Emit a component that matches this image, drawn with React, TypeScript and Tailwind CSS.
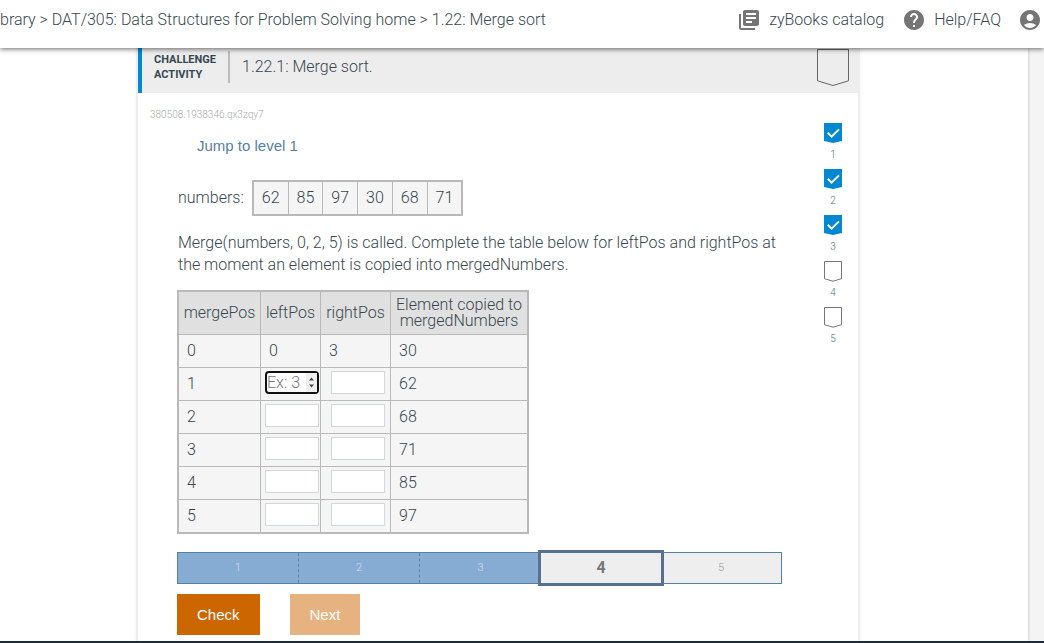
import { MdAccountCircle, MdHelp, MdLibraryBooks } from 'react-icons/md';
import clsx from 'clsx';

const NUMBERS = [62, 85, 97, 30, 68, 71];
const MERGED = [30, 62, 68, 71, 85, 97];
const LEVELS = [1, 2, 3, 4, 5];
const CURRENT_LEVEL = 4;

function LevelFlag({ done }: { done: boolean }) {
    return (
        <svg width="18" height="21" viewBox="0 0 18 21" className="block">
            {done ? (
                <>
                    <path d="M0 0h18v18l-9 2-9-2z" fill="#0288d1" />
                    <path d="M3.8 9.8 7.6 13.6 15 6.4" fill="none" stroke="#fff" strokeWidth="2" />
                </>
            ) : (
                <path d="M.5.5h17v17.2L9 20.2.5 17.7z" fill="#fff" stroke="#777" />
            )}
        </svg>
    );
}

function TopBar() {
    return (
        <header className="relative z-10 flex h-12 shrink-0 items-center justify-between bg-white pb-2 pr-0.5 text-[#37474f] shadow-[0_1px_5px_rgba(0,0,0,0.6)]">
            <nav className="overflow-hidden whitespace-nowrap">
                brary &gt; DAT/305: Data Structures for Problem Solving home &gt; 1.22: Merge sort
            </nav>
            <div className="flex shrink-0 items-center">
                <a href="#catalog" className="mr-[18px] flex items-center gap-2">
                    <MdLibraryBooks size={24} className="text-[#757575]" />
                    zyBooks catalog
                </a>
                <a href="#help" className="mr-[17px] flex items-center gap-2">
                    <MdHelp size={24} className="text-[#757575]" />
                    Help/FAQ
                </a>
                <button aria-label="Account">
                    <MdAccountCircle size={24} className="text-[#757575]" />
                </button>
            </div>
        </header>
    );
}

function PositionInput({ label, active }: { label: string; active?: boolean }) {
    return (
        <div className="relative w-[54px]">
            <input
                type="number"
                aria-label={label}
                placeholder={active ? 'Ex: 3' : undefined}
                className={clsx(
                    'block h-[23px] w-full bg-white outline-none placeholder:text-[#757575] [&::-webkit-inner-spin-button]:appearance-none',
                    active ? 'rounded border-2 border-[#101010]' : 'border border-[#cfd8dc]'
                )}
            />
            {active && (
                <svg
                    width="11"
                    height="19"
                    viewBox="0 0 11 19"
                    className="pointer-events-none absolute right-0.5 top-0.5"
                >
                    <path d="M0 0h11v19H0z" fill="#efefef" />
                    <path d="M3 7.5 5.5 4.5 8 7.5zM3 11.5 5.5 14.5 8 11.5z" fill="#444" />
                </svg>
            )}
        </div>
    );
}

function MergeTable() {
    const head = 'border-b border-[#b9b9b9] bg-[#e0e0e0] p-0 text-center font-light leading-4';
    const cell = 'border-b border-[#b9b9b9] px-2 py-0 group-last:border-b-0';
    const inputCell = 'border-b border-r border-[#b9b9b9] pt-[3px] align-top group-last:border-b-0';

    return (
        <table className="mt-3.5 table-fixed border-separate border-spacing-0 border-2 border-[#b9b9b9] bg-[#f5f5f5] text-[#37474f]">
            <thead>
                <tr className="h-[43px]">
                    <th className={clsx(head, 'w-[82px] border-r')}>mergePos</th>
                    <th className={clsx(head, 'w-[60px] border-r')}>leftPos</th>
                    <th className={clsx(head, 'w-[70px] border-r')}>rightPos</th>
                    <th className={clsx(head, 'w-[136px]')}>
                        Element copied to
                        <br />
                        mergedNumbers
                    </th>
                </tr>
            </thead>
            <tbody>
                {MERGED.map((value, pos) => (
                    <tr key={pos} className="group h-[33px] last:h-8">
                        <td className={clsx(cell, 'border-r')}>{pos}</td>
                        {pos === 0 ? (
                            <>
                                <td className={clsx(cell, 'border-r')}>0</td>
                                <td className={clsx(cell, 'border-r')}>3</td>
                            </>
                        ) : (
                            <>
                                <td className={clsx(inputCell, 'pl-1')}>
                                    <PositionInput label={`leftPos ${pos}`} active={pos === 1} />
                                </td>
                                <td className={clsx(inputCell, 'pl-2.5')}>
                                    <PositionInput label={`rightPos ${pos}`} />
                                </td>
                            </>
                        )}
                        <td className={cell}>{value}</td>
                    </tr>
                ))}
            </tbody>
        </table>
    );
}

function ProgressBar() {
    return (
        <ol className="mt-[18px] flex h-8 border border-[#5780a6] bg-[#eee] text-[11px]">
            {LEVELS.map((level) => (
                <li
                    key={level}
                    className={clsx(
                        'flex items-center justify-center',
                        level < CURRENT_LEVEL && 'w-[121px] shrink-0 bg-[#87acd3] text-[#d5dde6]',
                        level < CURRENT_LEVEL - 1 && 'border-r border-dashed border-[#5780a6]',
                        level === CURRENT_LEVEL &&
                            'relative flex-1 text-base font-bold text-[#777] outline-3 outline-[#566f93]',
                        level > CURRENT_LEVEL && 'flex-1 text-[#999]'
                    )}
                >
                    {level}
                </li>
            ))}
        </ol>
    );
}

export default function App() {
    return (
        <div className="flex h-screen flex-col overflow-hidden border-b-2 border-[#1f2940] bg-[#f4f4f4] font-['Roboto',sans-serif] text-base font-light">
            <TopBar />
            <main className="mr-4 flex min-h-0 flex-1 justify-center bg-white pr-8 shadow-[0_0_3px_rgba(0,0,0,0.25)]">
                <section className="w-[720px] bg-white shadow-[0_0_0_2px_#eee,0_0_6px_rgba(0,0,0,0.1)]">
                    <div className="flex h-[45px] items-center border-l-4 border-[#0288d1] bg-[#ededed] pb-2 pl-3 pr-[9px]">
                        <div className="w-[74px] text-[11px] font-bold uppercase leading-[15px] text-[#37474f]">
                            Challenge activity
                        </div>
                        <div className="h-8 w-0.5 bg-[#bbb]" />
                        <h1 className="ml-3 flex-1 text-[#37474f]">1.22.1: Merge sort.</h1>
                        <svg width="32" height="37" viewBox="0 0 32 37" className="block overflow-visible">
                            <path d="M.5 1.5h31v31.3L16 37.5.5 32.8z" fill="none" stroke="#666" />
                        </svg>
                    </div>

                    <div className="flex">
                        <div className="flex-1 pl-3 pt-3.5">
                            <div className="text-[10px] leading-4 text-[#aaa]">380508.1938346.qx3zqy7</div>
                            <div className="ml-[27px] mr-[26px]">
                                <a
                                    href="#level-1"
                                    className="ml-5 mt-3.5 block font-['Liberation_Sans',sans-serif] text-[15px] font-normal leading-[18px] text-[#5780a6]"
                                >
                                    Jump to level 1
                                </a>

                                <div className="mt-[25px] flex items-center gap-2 pl-px text-[#37474f]">
                                    <span>numbers:</span>
                                    <div className="flex border-2 border-[#b9b9b9] bg-[#f5f5f5]">
                                        {NUMBERS.map((n) => (
                                            <div
                                                key={n}
                                                className="flex h-8 items-center justify-center border-r border-[#b9b9b9] px-2 last:border-r-0"
                                            >
                                                {n}
                                            </div>
                                        ))}
                                    </div>
                                </div>

                                <p className="mt-4 pl-px leading-[22px] text-[#37474f]">
                                    Merge(numbers, 0, 2, 5) is called. Complete the table below for leftPos and rightPos at
                                    the moment an element is copied into mergedNumbers.
                                </p>

                                <MergeTable />
                                <ProgressBar />

                                <div className="mt-2.5 flex gap-[30px] font-['Liberation_Sans',sans-serif] text-[15px] font-normal leading-[17px] text-white">
                                    <button className="bg-[#cc6600] px-5 py-3">Check</button>
                                    <button disabled className="bg-[#e6b280] px-5 py-3">
                                        Next
                                    </button>
                                </div>
                            </div>
                        </div>

                        <ol className="flex w-[50px] flex-col items-center pt-[30px]">
                            {LEVELS.map((level) => (
                                <li
                                    key={level}
                                    className="flex h-[46px] flex-col items-center gap-[3px] text-[10px] text-[#546e7a]"
                                >
                                    <LevelFlag done={level < CURRENT_LEVEL} />
                                    {level}
                                </li>
                            ))}
                        </ol>
                    </div>
                </section>
            </main>
        </div>
    );
}
